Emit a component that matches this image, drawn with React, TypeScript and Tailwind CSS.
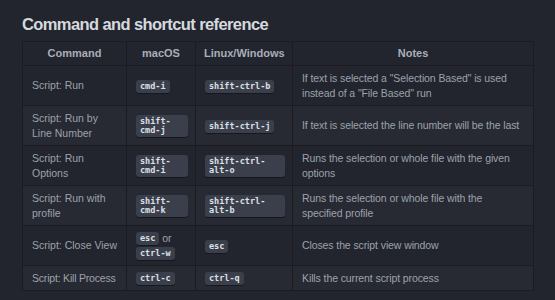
const rows: { cmd: string; mac: React.ReactNode; linux: React.ReactNode; note: string }[] = [
  {
    cmd: 'Script: Run',
    mac: <Kbd>cmd-i</Kbd>,
    linux: <Kbd>shift-ctrl-b</Kbd>,
    note: 'If text is selected a "Selection Based" is used instead of a "File Based" run',
  },
  {
    cmd: 'Script: Run by Line Number',
    mac: <Kbd>shift-cmd-j</Kbd>,
    linux: <Kbd>shift-ctrl-j</Kbd>,
    note: 'If text is selected the line number will be the last',
  },
  {
    cmd: 'Script: Run Options',
    mac: <Kbd>shift-cmd-i</Kbd>,
    linux: <Kbd>shift-ctrl-alt-o</Kbd>,
    note: 'Runs the selection or whole file with the given options',
  },
  {
    cmd: 'Script: Run with profile',
    mac: <Kbd>shift-cmd-k</Kbd>,
    linux: <Kbd>shift-ctrl-alt-b</Kbd>,
    note: 'Runs the selection or whole file with the specified profile',
  },
  {
    cmd: 'Script: Close View',
    mac: (
      <>
        <Kbd>esc</Kbd> or <Kbd>ctrl-w</Kbd>
      </>
    ),
    linux: <Kbd>esc</Kbd>,
    note: 'Closes the script view window',
  },
  {
    cmd: 'Script: Kill Process',
    mac: <Kbd>ctrl-c</Kbd>,
    linux: <Kbd>ctrl-q</Kbd>,
    note: 'Kills the current script process',
  },
]

function Kbd({ children }: { children: React.ReactNode }) {
  return (
    <code className="inline-block align-middle rounded-[3px] bg-[#3a3f4b] px-[4px] py-[2px] text-[8.5px] leading-[9px] font-bold tracking-normal text-[#dde0e6] shadow-[0_1px_0_#16181d] font-['DejaVu_Sans_Mono',monospace]">
      {children}
    </code>
  )
}

export default function App() {
  return (
    <div className="w-[555px] h-[300px] overflow-hidden bg-[#22252e] pl-[22px] pt-[14px] font-['Liberation_Sans',Arial,sans-serif]">
      <h2 className="text-[16.5px] font-bold tracking-[-0.6px] text-[#d6d9de] leading-[20px]">
        Command and shortcut reference
      </h2>

      <table className="mt-[7px] w-[511px] table-fixed border-collapse text-[10.5px] leading-[15px] text-[#9ca2ac]">
        <colgroup>
          <col className="w-[104px]" />
          <col className="w-[69px]" />
          <col className="w-[97px]" />
          <col className="w-[241px]" />
        </colgroup>
        <thead>
          <tr className="h-[24px]">
            {['Command', 'macOS', 'Linux/Windows', 'Notes'].map((h) => (
              <th key={h} className="border border-[#1a1c22] px-[8px] text-center text-[11px] font-bold text-[#a9aeb8]">
                {h}
              </th>
            ))}
          </tr>
        </thead>
        <tbody>
          {rows.map((r, i) => (
            <tr key={r.cmd} className={i % 2 === 1 ? 'bg-[#272a33]' : ''}>
              <td className="border border-[#1a1c22] px-[9px] py-[4.5px] align-middle">
                <span className={i === 5 ? 'whitespace-nowrap tracking-[-0.2px]' : ''}>{r.cmd}</span>
              </td>
              <td className="border border-[#1a1c22] pl-[9px] pr-[7px] py-[4.5px] align-middle">{r.mac}</td>
              <td className="border border-[#1a1c22] pl-[9px] pr-[7px] py-[4.5px] align-middle">{r.linux}</td>
              <td className="border border-[#1a1c22] px-[9px] py-[4.5px] align-middle tracking-[-0.1px]">{r.note}</td>
            </tr>
          ))}
        </tbody>
      </table>
    </div>
  )
}
